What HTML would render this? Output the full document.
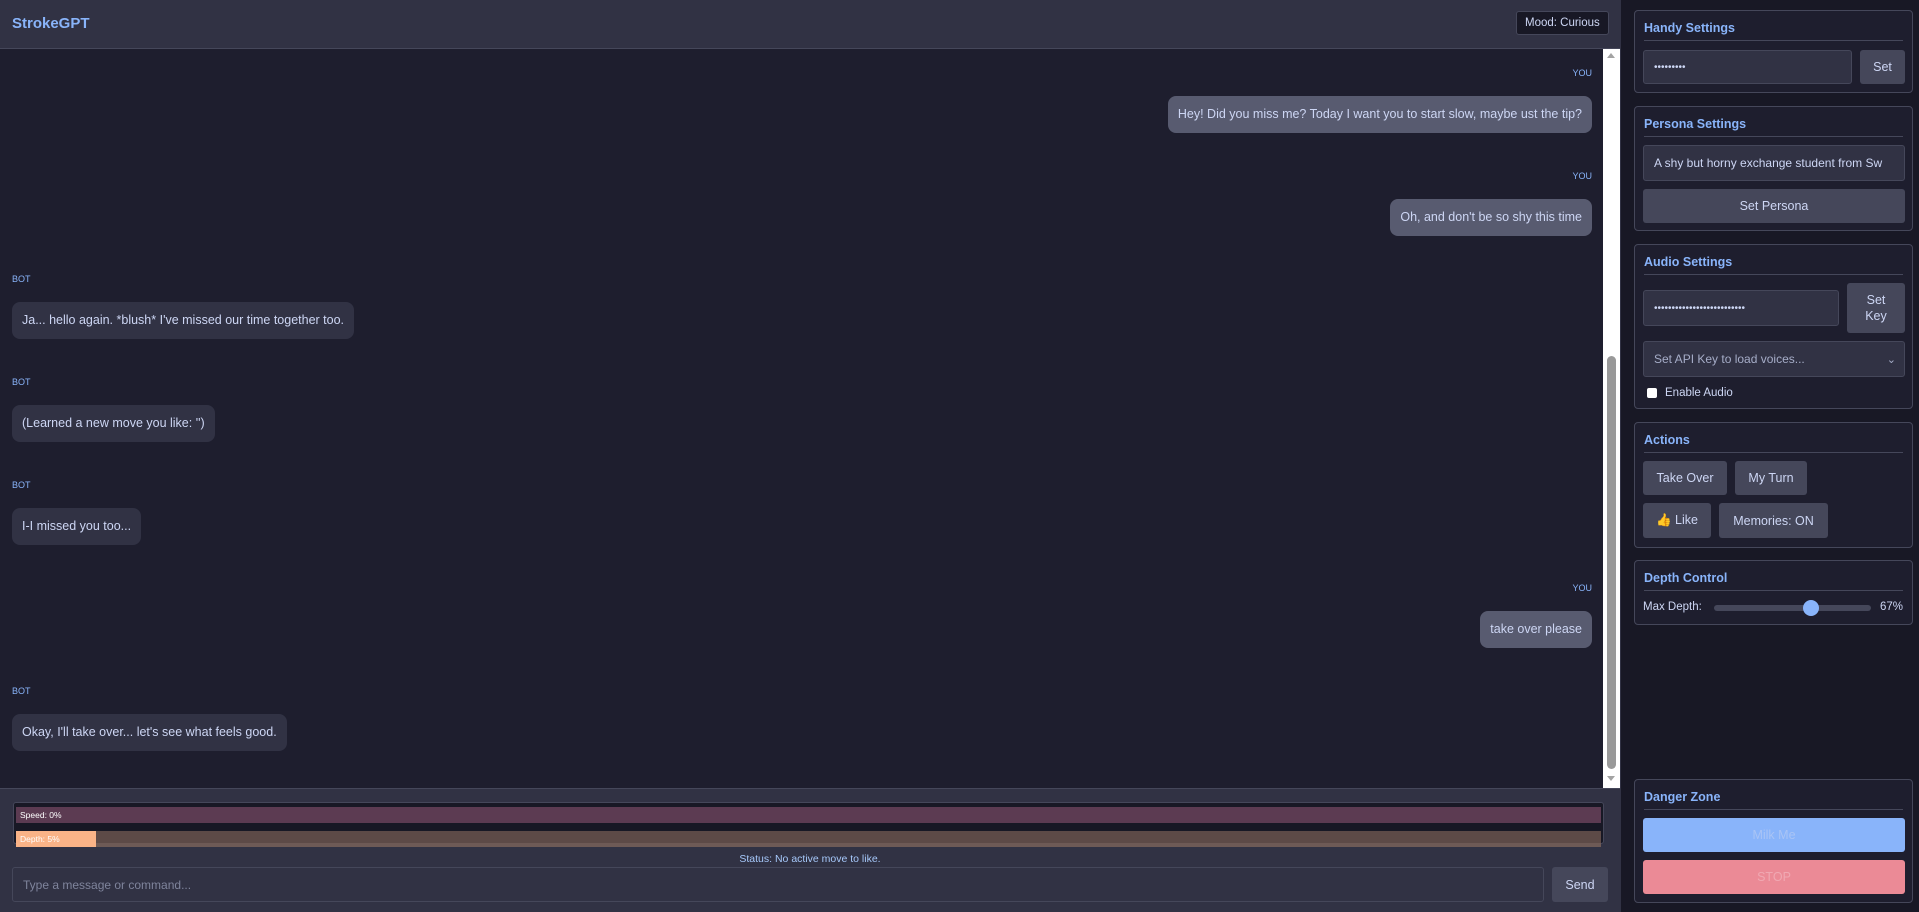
<!DOCTYPE html>
<html><head><meta charset="utf-8"><style>
*{box-sizing:border-box;margin:0;padding:0}
body{width:1919px;height:912px;overflow:hidden;background:#1e1e2e;font-family:"Liberation Sans",sans-serif;color:#cdd6f4;position:relative}
.abs{position:absolute}
.hdr{left:0;top:0;width:1620px;height:49px;background:#313244;border-bottom:1px solid #45475a}
.title{left:12px;top:15px;font-size:15px;font-weight:bold;color:#89b4fa}
.mood{left:1516px;top:11px;height:24px;padding:0 8px;background:#181825;border:1px solid #45475a;border-radius:3px;font-size:11.5px;line-height:22px}
.scroll{left:1603px;top:49px;width:17px;height:739px;background:#fff}
.thumb{left:1607px;top:356px;width:9px;height:413px;background:#999;border-radius:5px}
.lbl{font-size:9px;color:#89b4fa}
.bub{height:37px;border-radius:8px;padding:0 10px;font-size:12.5px;line-height:37px;white-space:nowrap}
.u{background:#585b70;right:327px}
.b{background:#313244;left:12px}
.bottom{left:0;top:788px;width:1620px;height:124px;background:#313244;border-top:1px solid #45475a}
.side{left:1620px;top:0;width:299px;height:912px;background:#181825;border-left:1px solid #313244}
.pan{left:1634px;width:279px;background:#1e1e2e;border:1px solid #45475a;border-radius:4px}
.ph{position:absolute;left:9px;right:9px;top:10px;font-size:12.5px;font-weight:bold;color:#89b4fa;border-bottom:1px solid #45475a;padding-bottom:5px}
.inp{background:#313244;border:1px solid #45475a;border-radius:3px;font-size:12px;color:#cdd6f4;padding-left:10px;display:flex;align-items:center}
.btn{background:#45475a;border-radius:3px;font-size:12.5px;color:#cdd6f4;display:flex;align-items:center;justify-content:center;text-align:center}
</style></head><body>
<div class="abs hdr"></div>
<div class="abs title">StrokeGPT</div>
<div class="abs mood">Mood: Curious</div>

<div class="abs lbl" style="right:327px;top:68px">YOU</div>
<div class="abs bub u" style="top:96px">Hey! Did you miss me? Today I want you to start slow, maybe ust the tip?</div>
<div class="abs lbl" style="right:327px;top:171px">YOU</div>
<div class="abs bub u" style="top:199px">Oh, and don't be so shy this time</div>
<div class="abs lbl" style="left:12px;top:274px">BOT</div>
<div class="abs bub b" style="top:302px">Ja... hello again. *blush* I've missed our time together too.</div>
<div class="abs lbl" style="left:12px;top:377px">BOT</div>
<div class="abs bub b" style="top:405px">(Learned a new move you like: '')</div>
<div class="abs lbl" style="left:12px;top:480px">BOT</div>
<div class="abs bub b" style="top:508px">I-I missed you too...</div>
<div class="abs lbl" style="right:327px;top:583px">YOU</div>
<div class="abs bub u" style="top:611px">take over please</div>
<div class="abs lbl" style="left:12px;top:686px">BOT</div>
<div class="abs bub b" style="top:714px">Okay, I'll take over... let's see what feels good.</div>

<div class="abs scroll"></div>
<div class="abs" style="left:1607px;top:53px;width:0;height:0;border:4px solid transparent;border-bottom:5px solid #a3a3a3;border-top:0"></div>
<div class="abs thumb"></div>
<div class="abs" style="left:1607px;top:776px;width:0;height:0;border:4px solid transparent;border-top:5px solid #a3a3a3;border-bottom:0"></div>

<div class="abs bottom"></div>
<div class="abs" style="left:13px;top:802px;width:1591px;height:42px;background:#181825;border:1px solid #45475a;border-radius:3px"></div>
<div class="abs" style="left:16px;top:807px;width:1585px;height:16px;background:#5c3b52"></div>
<div class="abs" style="left:20px;top:808px;font-size:8.5px;line-height:14px;color:#fff">Speed: 0%</div>
<div class="abs" style="left:16px;top:831px;width:1585px;height:16px;background:#5d4a47"></div>
<div class="abs" style="left:16px;top:843px;width:1585px;height:4px;background:#7a6560;opacity:.6"></div>
<div class="abs" style="left:16px;top:831px;width:80px;height:16px;background:#fab387"></div>
<div class="abs" style="left:20px;top:832px;font-size:8.5px;line-height:14px;color:#fff">Depth: 5%</div>
<div class="abs" style="left:0;width:1620px;top:853px;text-align:center;font-size:10.5px;color:#a6c8fa">Status: No active move to like.</div>
<div class="abs inp" style="left:12px;top:867px;width:1532px;height:35px;color:#7f849c">Type a message or command...</div>
<div class="abs btn" style="left:1552px;top:867px;width:56px;height:35px">Send</div>

<div class="abs side"></div>
<div class="abs pan" style="top:10px;height:83px"><div class="ph">Handy Settings</div></div>
<div class="abs inp" style="left:1643px;top:50px;width:209px;height:34px;font-size:10px">•••••••••</div>
<div class="abs btn" style="left:1860px;top:50px;width:45px;height:34px">Set</div>

<div class="abs pan" style="top:106px;height:125px"><div class="ph">Persona Settings</div></div>
<div class="abs inp" style="left:1643px;top:145px;width:262px;height:36px;overflow:hidden;white-space:nowrap">A shy but horny exchange student from Sw</div>
<div class="abs btn" style="left:1643px;top:189px;width:262px;height:34px">Set Persona</div>

<div class="abs pan" style="top:244px;height:165px"><div class="ph">Audio Settings</div></div>
<div class="abs inp" style="left:1643px;top:290px;width:196px;height:36px;font-size:10px">••••••••••••••••••••••••••</div>
<div class="abs btn" style="left:1847px;top:283px;width:58px;height:50px;line-height:16px">Set<br>Key</div>
<div class="abs inp" style="left:1643px;top:341px;width:262px;height:36px;color:#a6adc8">Set API Key to load voices...<span style="position:absolute;right:8px;font-size:11px">⌄</span></div>
<div class="abs" style="left:1647px;top:388px;width:10px;height:10px;background:#fff;border-radius:2px"></div>
<div class="abs" style="left:1665px;top:387px;font-size:11.5px">Enable Audio</div>

<div class="abs pan" style="top:422px;height:126px"><div class="ph">Actions</div></div>
<div class="abs btn" style="left:1643px;top:461px;width:84px;height:34px">Take Over</div>
<div class="abs btn" style="left:1735px;top:461px;width:72px;height:34px">My Turn</div>
<div class="abs btn" style="left:1643px;top:503px;width:68px;height:35px">👍 Like</div>
<div class="abs btn" style="left:1719px;top:503px;width:109px;height:35px">Memories: ON</div>

<div class="abs pan" style="top:560px;height:65px"><div class="ph">Depth Control</div></div>
<div class="abs" style="left:1643px;top:601px;font-size:11.5px">Max Depth:</div>
<div class="abs" style="left:1714px;top:605px;width:157px;height:6px;background:#45475a;border-radius:3px"></div>
<div class="abs" style="left:1803px;top:600px;width:16px;height:16px;background:#89b4fa;border-radius:50%"></div>
<div class="abs" style="left:1880px;top:601px;font-size:11.5px">67%</div>

<div class="abs pan" style="top:779px;height:124px"><div class="ph">Danger Zone</div></div>
<div class="abs btn" style="left:1643px;top:818px;width:262px;height:34px;background:#89b4fa;color:#a9c4f5">Milk Me</div>
<div class="abs btn" style="left:1643px;top:860px;width:262px;height:34px;background:#eb8a96;color:#f0a8b2">STOP</div>
</body></html>
